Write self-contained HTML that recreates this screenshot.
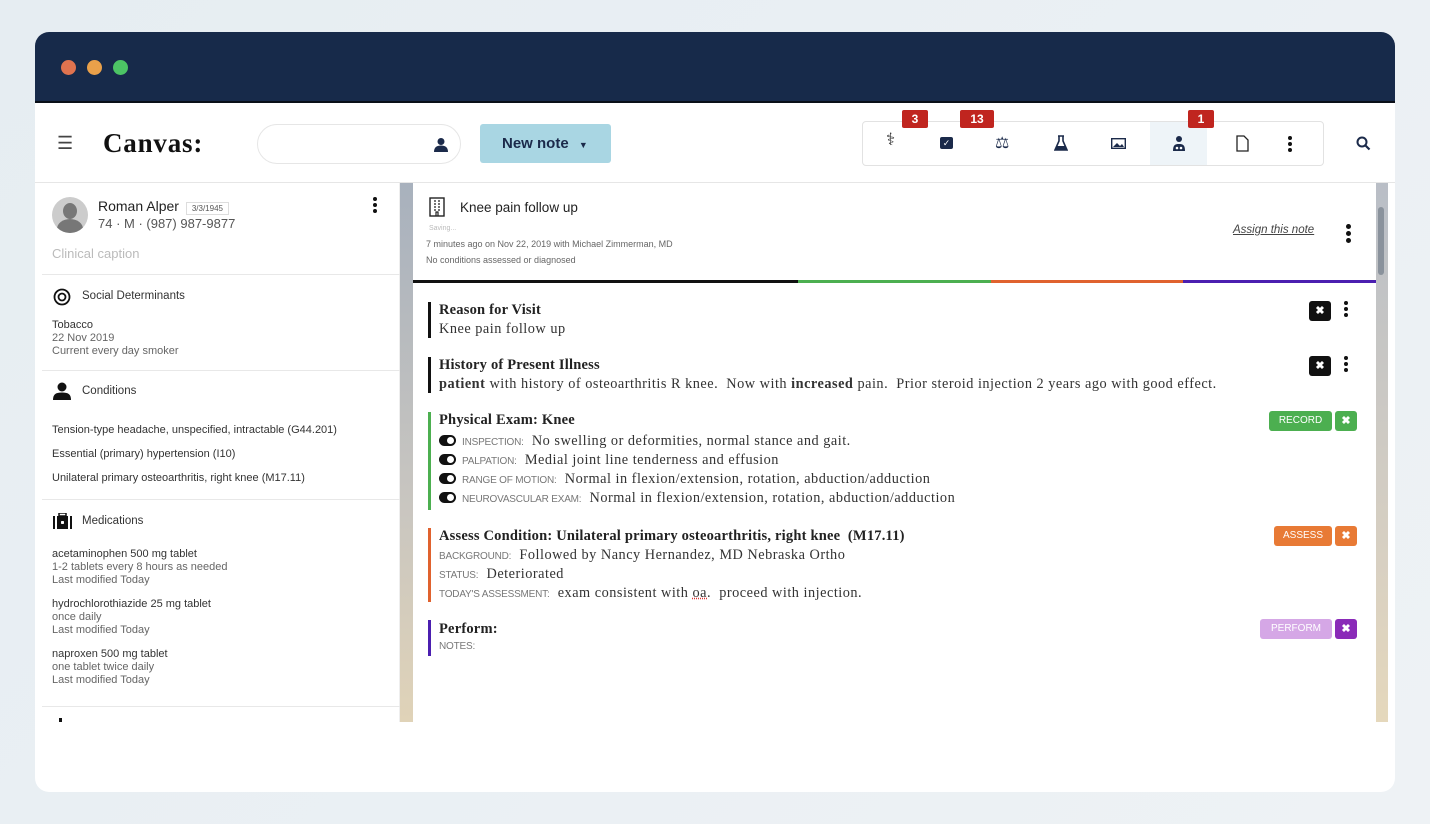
<!DOCTYPE html>
<html><head><meta charset="utf-8"><style>
*{margin:0;padding:0;box-sizing:border-box}
body{width:1430px;height:824px;background:linear-gradient(135deg,#e6edf2,#eef2f5);font-family:"Liberation Sans",sans-serif;position:relative;overflow:hidden;color:#222}
.win{position:absolute;left:35px;top:32px;width:1360px;height:760px;background:#fff;border-radius:14px;overflow:hidden}
.hdr{position:absolute;left:0;top:0;width:1360px;height:71px;background:#172a4a;border-bottom:2px solid #0a0f18}
.dot{position:absolute;top:28px;width:15px;height:15px;border-radius:50%}
.a{position:absolute}
.serif{font-family:"Liberation Serif",serif}
.lbl{font-size:10px;color:#777;text-transform:uppercase;letter-spacing:-.2px}
.sec{position:absolute;left:393px;width:950px}
.bar{position:absolute;left:0;width:3px}
.t{font-size:14.5px;font-weight:bold;color:#222;letter-spacing:.2px;white-space:nowrap}
.b{font-size:14.3px;color:#333;letter-spacing:.5px;white-space:nowrap}
.btnx{position:absolute;width:22px;height:20px;border-radius:3px;color:#fff;font-size:11px;font-weight:bold;text-align:center;line-height:20px}
.kb{position:absolute;width:3px}
.kb i{display:block;width:4px;height:4px;border-radius:50%;background:#111;margin-bottom:2px}
.badge{position:absolute;top:78px;height:18px;background:#c0251f;color:#fff;font-size:12px;font-weight:bold;text-align:center;line-height:18px;border-radius:2px}
.tog{display:inline-block;width:17px;height:11px;border-radius:6px;background:#111;vertical-align:-1px;margin-right:6px;position:relative}
.tog:after{content:"";position:absolute;right:2px;top:2px;width:7px;height:7px;border-radius:50%;background:#fff}
.lp{font-size:11px;color:#333}
</style></head><body>
<div class="win">
<div class="hdr">
<div class="dot" style="left:26px;background:#e0734f"></div>
<div class="dot" style="left:52px;background:#e9a04a"></div>
<div class="dot" style="left:78px;background:#4cc465"></div>
</div>
<div class="a" style="left:22px;top:101px;font-size:18px;color:#444">☰</div>
<div class="a serif" style="left:68px;top:96px;font-size:27px;color:#111;letter-spacing:.8px;font-weight:bold">Canvas:</div>
<div class="a" style="left:222px;top:92px;width:204px;height:40px;border:1px solid #e6e6e6;border-radius:20px"></div>
<svg class="a" style="left:399px;top:105px" width="14" height="15" viewBox="0 0 14 15"><circle cx="7" cy="4.5" r="3.5" fill="#1b2a4a"/><path d="M0 15c0-5 3-6.5 7-6.5s7 1.5 7 6.5z" fill="#1b2a4a"/></svg>
<div class="a" style="left:445px;top:92px;width:131px;height:39px;background:#a9d6e3;border-radius:3px;font-size:15px;color:#1b2a4a;line-height:39px;padding-left:22px;font-weight:bold">New note <span style="font-size:9px;margin-left:6px">▼</span></div>
<div class="a" style="left:827px;top:89px;width:462px;height:45px;border:1px solid #e2e2e2;border-radius:4px"></div>
<div class="a" style="left:1115px;top:90px;width:57px;height:43px;background:#eef4f8"></div>
<div class="badge" style="left:867px;width:26px">3</div>
<div class="badge" style="left:925px;width:34px">13</div>
<div class="badge" style="left:1153px;width:26px">1</div>
<div class="a" style="left:851px;top:98px;font-size:17px;color:#333">⚕</div>
<div class="a" style="left:905px;top:105px;width:13px;height:12px;background:#1b2a4a;border-radius:2px;color:#fff;font-size:9px;line-height:12px;text-align:center">✓</div>
<div class="a" style="left:960px;top:101px;font-size:16px;color:#1b2a4a">⚖</div>
<svg class="a" style="left:1019px;top:103px" width="14" height="16" viewBox="0 0 14 16"><path d="M4 1h6M5 1v5L1 15h12L9 6V1" fill="none" stroke="#1b2a4a" stroke-width="1.6"/><path d="M3 11h8l2 4H1z" fill="#1b2a4a"/></svg>
<svg class="a" style="left:1076px;top:106px" width="15" height="11" viewBox="0 0 15 11"><rect x=".7" y=".7" width="13.6" height="9.6" fill="none" stroke="#1b2a4a" stroke-width="1.4"/><path d="M2 9l4-4 3 3 2-2 2 3z" fill="#1b2a4a"/></svg>
<svg class="a" style="left:1137px;top:103px" width="14" height="16" viewBox="0 0 14 16"><circle cx="7" cy="4" r="3" fill="#1b2a4a"/><path d="M1 16c0-6 2-7 6-7s6 1 6 7z" fill="#1b2a4a"/><circle cx="5" cy="13" r="1.3" fill="#fff"/><circle cx="9" cy="13" r="1.3" fill="#fff"/></svg>
<svg class="a" style="left:1201px;top:103px" width="13" height="17" viewBox="0 0 13 17"><path d="M1 1h7l4 4v11H1z" fill="none" stroke="#222" stroke-width="1.3"/></svg>
<div class="kb" style="left:1253px;top:104px"><i></i><i></i><i></i></div>
<svg class="a" style="left:1321px;top:104px" width="15" height="15" viewBox="0 0 15 15"><circle cx="6" cy="6" r="4.5" fill="none" stroke="#1b2a4a" stroke-width="2"/><path d="M9.5 9.5l4 4" stroke="#1b2a4a" stroke-width="2.2"/></svg>
<div class="a" style="left:0;top:150px;width:1360px;height:1px;background:#e6e6e6"></div>

<div class="a" style="left:7px;top:151px;width:358px;height:539px;border-right:1px solid #eee"></div>
<div class="a" style="left:17px;top:165px;width:36px;height:36px;border-radius:50%;background:#ccc;overflow:hidden"><div style="position:absolute;left:11px;top:6px;width:14px;height:16px;border-radius:50%;background:#777"></div><div style="position:absolute;left:5px;top:22px;width:26px;height:20px;border-radius:50% 50% 0 0;background:#777"></div></div>
<div class="a" style="left:63px;top:166px;font-size:14px;color:#222">Roman Alper <span style="font-size:8px;border:1px solid #ddd;padding:1px 5px;color:#555;margin-left:3px">3/3/1945</span></div>
<div class="a" style="left:63px;top:184px;font-size:13px;color:#555">74 · M · (987) 987-9877</div>
<div class="kb" style="left:338px;top:165px"><i></i><i></i><i></i></div>
<div class="a" style="left:17px;top:214px;font-size:13px;color:#bbb">Clinical caption</div>
<div class="a" style="left:7px;top:242px;width:358px;height:1px;background:#e8e8e8"></div>
<svg class="a" style="left:18px;top:256px" width="18" height="18" viewBox="0 0 18 18"><circle cx="9" cy="9" r="7.5" fill="none" stroke="#111" stroke-width="1.8"/><circle cx="9" cy="9" r="3.5" fill="none" stroke="#111" stroke-width="1.8"/></svg>
<div class="a" style="left:47px;top:258px;font-size:11.5px;color:#333">Social Determinants</div>
<div class="a lp" style="left:17px;top:287px;line-height:13px">Tobacco<br><span style="color:#666">22 Nov 2019<br>Current every day smoker</span></div>
<div class="a" style="left:7px;top:338px;width:358px;height:1px;background:#e8e8e8"></div>
<svg class="a" style="left:18px;top:350px" width="18" height="18" viewBox="0 0 18 18"><circle cx="9" cy="5" r="4.5" fill="#111"/><path d="M0 18c0-6 3-7.5 9-7.5s9 1.5 9 7.5z" fill="#111"/></svg>
<div class="a" style="left:47px;top:353px;font-size:11.5px;color:#333">Conditions</div>
<div class="a lp" style="left:17px;top:386px;line-height:24px">Tension-type headache, unspecified, intractable (G44.201)<br>Essential (primary) hypertension (I10)<br>Unilateral primary osteoarthritis, right knee (M17.11)</div>
<div class="a" style="left:7px;top:467px;width:358px;height:1px;background:#e8e8e8"></div>
<svg class="a" style="left:18px;top:481px" width="19" height="16" viewBox="0 0 19 16"><rect x="0" y="3" width="2" height="13" fill="#111"/><rect x="17" y="3" width="2" height="13" fill="#111"/><rect x="4" y="3" width="11" height="13" fill="#111"/><rect x="6" y="0" width="7" height="3" fill="none" stroke="#111" stroke-width="1.5"/><path d="M8 9.5h3M9.5 8v3" stroke="#fff" stroke-width="2.2"/></svg>
<div class="a" style="left:47px;top:483px;font-size:11.5px;color:#333">Medications</div>
<div class="a lp" style="left:17px;top:516px;line-height:13px">acetaminophen 500 mg tablet<br><span style="color:#666">1-2 tablets every 8 hours as needed<br>Last modified Today</span></div>
<div class="a lp" style="left:17px;top:566px;line-height:13px">hydrochlorothiazide 25 mg tablet<br><span style="color:#666">once daily<br>Last modified Today</span></div>
<div class="a lp" style="left:17px;top:616px;line-height:13px">naproxen 500 mg tablet<br><span style="color:#666">one tablet twice daily<br>Last modified Today</span></div>
<div class="a" style="left:7px;top:674px;width:358px;height:1px;background:#e8e8e8"></div>
<div class="a" style="left:24px;top:686px;width:3px;height:4px;background:#111"></div>

<div class="a" style="left:365px;top:151px;width:13px;height:539px;background:linear-gradient(#a8b1bd,#c9c6c0 60%,#e0d3b8)"></div>
<div class="a" style="left:1341px;top:151px;width:12px;height:539px;background:linear-gradient(#b9bec6,#d8d0c2 70%,#e5d8bc)"></div>
<div class="a" style="left:1343px;top:175px;width:6px;height:68px;background:#8a929c;border-radius:3px"></div>

<svg class="a" style="left:394px;top:165px" width="16" height="20" viewBox="0 0 16 20"><rect x="1" y="1" width="14" height="18" fill="none" stroke="#222" stroke-width="1.4"/><path d="M5 4h2M9 4h2M5 7h2M9 7h2M5 10h2M9 10h2M5 13h2M9 13h2M7 19v-4h2v4" stroke="#222" stroke-width="1.2" fill="none"/></svg>
<div class="a" style="left:425px;top:168px;font-size:13.5px;color:#222">Knee pain follow up</div>
<div class="a" style="left:394px;top:193px;font-size:7px;color:#bbb">Saving...</div>
<div class="a" style="left:391px;top:207px;font-size:9px;color:#666">7 minutes ago on Nov 22, 2019 with Michael Zimmerman, MD</div>
<div class="a" style="left:391px;top:223px;font-size:9px;color:#666">No conditions assessed or diagnosed</div>
<div class="a" style="left:1198px;top:192px;font-size:11.5px;color:#444;font-style:italic;text-decoration:underline">Assign this note</div>
<div class="kb" style="left:1311px;top:192px"><i style="width:5px;height:5px"></i><i style="width:5px;height:5px"></i><i style="width:5px;height:5px"></i></div>
<div class="a" style="left:378px;top:248px;width:385px;height:3px;background:#111"></div>
<div class="a" style="left:763px;top:248px;width:193px;height:3px;background:#4caf50"></div>
<div class="a" style="left:956px;top:248px;width:192px;height:3px;background:#e0622e"></div>
<div class="a" style="left:1148px;top:248px;width:193px;height:3px;background:#4b1fb0"></div>

<div class="sec serif" style="top:270px;height:36px">
<div class="bar" style="top:0;height:36px;background:#111"></div>
<div class="a t" style="left:11px;top:0">Reason for Visit</div>
<div class="a b" style="left:11px;top:19px">Knee pain follow up</div>
</div>
<div class="btnx" style="left:1274px;top:269px;background:#111">✖</div>
<div class="kb" style="left:1309px;top:269px"><i></i><i></i><i></i></div>

<div class="sec serif" style="top:325px;height:36px">
<div class="bar" style="top:0;height:36px;background:#111"></div>
<div class="a t" style="left:11px;top:0">History of Present Illness</div>
<div class="a b" style="left:11px;top:19px"><b>patient</b> with history of osteoarthritis R knee.&nbsp; Now with <b>increased</b> pain.&nbsp; Prior steroid injection 2 years ago with good effect.</div>
</div>
<div class="btnx" style="left:1274px;top:324px;background:#111">✖</div>
<div class="kb" style="left:1309px;top:324px"><i></i><i></i><i></i></div>

<div class="sec serif" style="top:380px;height:98px">
<div class="bar" style="top:0;height:98px;background:#4caf50"></div>
<div class="a t" style="left:11px;top:0">Physical Exam: Knee</div>
<div class="a b" style="left:11px;top:21px"><span class="tog"></span><span class="lbl" style="font-family:'Liberation Sans'">Inspection:</span>&nbsp; No swelling or deformities, normal stance and gait.</div>
<div class="a b" style="left:11px;top:40px"><span class="tog"></span><span class="lbl" style="font-family:'Liberation Sans'">Palpation:</span>&nbsp; Medial joint line tenderness and effusion</div>
<div class="a b" style="left:11px;top:59px"><span class="tog"></span><span class="lbl" style="font-family:'Liberation Sans'">Range of motion:</span>&nbsp; Normal in flexion/extension, rotation, abduction/adduction</div>
<div class="a b" style="left:11px;top:78px"><span class="tog"></span><span class="lbl" style="font-family:'Liberation Sans'">Neurovascular exam:</span>&nbsp; Normal in flexion/extension, rotation, abduction/adduction</div>
</div>
<div class="a" style="left:1234px;top:379px;width:63px;height:20px;background:#4caf50;border-radius:3px;color:#fff;font-size:10px;text-align:center;line-height:20px">RECORD</div>
<div class="btnx" style="left:1300px;top:379px;background:#4caf50">✖</div>

<div class="sec serif" style="top:496px;height:74px">
<div class="bar" style="top:0;height:74px;background:#e0622e"></div>
<div class="a t" style="left:11px;top:0">Assess Condition: Unilateral primary osteoarthritis, right knee&nbsp; (M17.11)</div>
<div class="a b" style="left:11px;top:19px"><span class="lbl" style="font-family:'Liberation Sans'">Background:</span>&nbsp; Followed by Nancy Hernandez, MD Nebraska Ortho</div>
<div class="a b" style="left:11px;top:38px"><span class="lbl" style="font-family:'Liberation Sans'">Status:</span>&nbsp; Deteriorated</div>
<div class="a b" style="left:11px;top:57px"><span class="lbl" style="font-family:'Liberation Sans'">Today's assessment:</span>&nbsp; exam consistent with <u style="text-decoration-color:#d33;text-decoration-style:dotted">oa</u>.&nbsp; proceed with injection.</div>
</div>
<div class="a" style="left:1239px;top:494px;width:58px;height:20px;background:#e87a35;border-radius:3px;color:#fff;font-size:10px;text-align:center;line-height:20px">ASSESS</div>
<div class="btnx" style="left:1300px;top:494px;background:#e87a35">✖</div>

<div class="sec serif" style="top:588px;height:36px">
<div class="bar" style="top:0;height:36px;background:#4b1fb0"></div>
<div class="a t" style="left:11px;top:1px">Perform:</div>
<div class="a lbl" style="left:11px;top:21px;font-family:'Liberation Sans'">Notes:</div>
</div>
<div class="a" style="left:1225px;top:587px;width:72px;height:20px;background:#d5a7e6;border-radius:3px;color:#fff;font-size:10px;text-align:center;line-height:20px">PERFORM</div>
<div class="btnx" style="left:1300px;top:587px;background:#8a2ab8">✖</div>
</div>
</body></html>
